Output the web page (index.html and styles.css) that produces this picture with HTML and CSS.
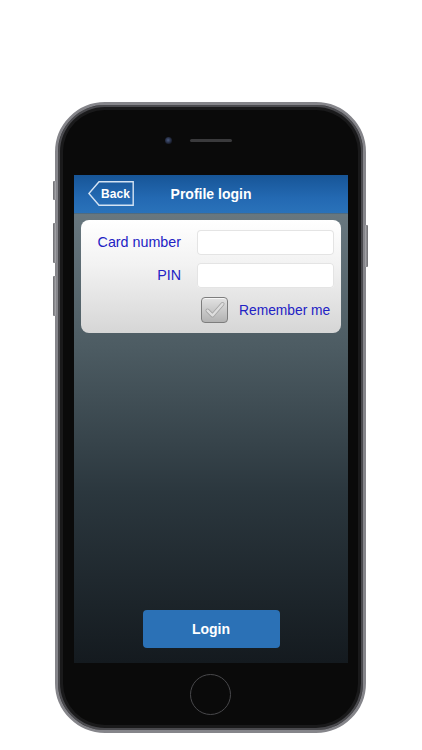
FILE: index.html
```html
<!DOCTYPE html>
<html>
<head>
<meta charset="utf-8">
<link rel="stylesheet" href="styles.css">
</head>
<body>
<div class="phone">
  <span class="side mute"></span>
  <span class="side volup"></span>
  <span class="side voldown"></span>
  <span class="side power"></span>
  <div class="top">
    <span class="camera"></span>
    <span class="speaker"></span>
  </div>
  <div class="screen">
    <div class="nav">
      <div class="nav-left">
        <a class="back">
          <svg class="back-shape" width="46" height="25" viewBox="0 0 46 25"><path d="M11 0.8 H45.2 V24.2 H11 L0.9 12.5 Z" fill="none" stroke="#d4e3f3" stroke-width="1.4"/></svg>
          <span class="back-text">Back</span>
        </a>
      </div>
      <div class="title">Profile login</div>
      <div></div>
    </div>
    <div class="content">
      <div class="card">
        <label class="label">Card number</label>
        <div class="input"></div>
        <label class="label">PIN</label>
        <div class="input"></div>
        <div></div>
        <div class="remember">
          <span class="checkbox">
            <svg width="22" height="20" viewBox="0 0 22 20"><path d="M3.5 10.5 L8.5 15.5 L18.5 4" fill="none" stroke="#a4a4a4" stroke-width="4" stroke-linejoin="round" stroke-linecap="round"/><path d="M3.5 10.5 L8.5 15.5 L18.5 4" fill="none" stroke="#dedede" stroke-width="2.4" stroke-linejoin="round" stroke-linecap="round"/></svg>
          </span>
          <span class="remember-text">Remember me</span>
        </div>
      </div>
      <div class="spacer"></div>
      <button class="login">Login</button>
    </div>
  </div>
  <div class="bottom">
    <span class="home"></span>
  </div>
</div>
</body>
</html>
```
FILE: styles.css
```css
html, body {
  margin: 0;
  padding: 0;
  background: #ffffff;
  font-family: "Liberation Sans", Arial, sans-serif;
}
.phone {
  position: relative;
  box-sizing: border-box;
  margin: 102px 0 0 55px;
  width: 311px;
  height: 631px;
  border-radius: 50px;
  border: 3px solid #85858a;
  background: #0a0a0a;
  box-shadow: inset 0 0 0 2px #4a4a4e, inset 0 0 0 5px #1a1a1b;
  display: flex;
  flex-direction: column;
}
.side {
  position: absolute;
  width: 3px;
  background: linear-gradient(90deg, #6c6c70, #a9a9ad);
  border-radius: 1px;
}
.mute { left: -5px; top: 76px; height: 19px; }
.volup { left: -5px; top: 118px; height: 40px; }
.voldown { left: -5px; top: 171px; height: 40px; }
.power { right: -5px; top: 120px; height: 42px; background: linear-gradient(90deg, #a9a9ad, #6c6c70); }
.top {
  height: 70px;
  display: flex;
  align-items: center;
  justify-content: center;
  gap: 18px;
  padding-right: 24px;
  box-sizing: border-box;
}
.camera {
  width: 7px;
  height: 7px;
  border-radius: 50%;
  background: radial-gradient(circle at 45% 45%, #4a5a80 0, #1d2335 60%, #0d0f15 100%);
}
.speaker {
  width: 42px;
  height: 3px;
  border-radius: 2px;
  background: #3a3a3c;
}
.screen {
  margin-left: 16px;
  width: 274px;
  height: 488px;
  display: flex;
  flex-direction: column;
  background: linear-gradient(180deg, #707f87 0%, #4d5c63 35%, #2b373e 65%, #141a1f 100%);
}
.nav {
  height: 38px;
  flex: none;
  background: linear-gradient(180deg, #175597 0%, #2369b2 60%, #2a72ba 100%);
  display: grid;
  grid-template-columns: 1fr auto 1fr;
  align-items: center;
  box-shadow: 0 1px 0 #4f6b80;
}
.nav-left {
  padding-left: 14px;
  display: flex;
}
.back {
  position: relative;
  width: 46px;
  height: 25px;
  display: flex;
  align-items: center;
  margin-top: -1px;
}
.back-shape {
  position: absolute;
  left: 0;
  top: 0;
}
.back-text {
  position: relative;
  color: #ffffff;
  font-size: 12px;
  font-weight: bold;
  padding-left: 13px;
  letter-spacing: 0.1px;
}
.title {
  color: #ffffff;
  font-weight: bold;
  font-size: 14px;
  margin-top: -1px;
}
.content {
  flex: 1;
  display: flex;
  flex-direction: column;
  align-items: center;
  padding: 7px 7px 15px;
}
.card {
  box-sizing: border-box;
  width: 260px;
  height: 113px;
  border-radius: 8px;
  background: linear-gradient(180deg, #ffffff 0%, #f2f2f2 40%, #d6d6d6 100%);
  display: grid;
  grid-template-columns: 100px 137px;
  grid-template-rows: 25px 25px 26px;
  column-gap: 16px;
  row-gap: 8px;
  padding: 10px 7px 0 0;
  align-items: center;
}
.label {
  text-align: right;
  color: #2222c4;
  font-size: 14.3px;
  margin-top: -1px;
}
.input {
  height: 25px;
  background: #ffffff;
  border-radius: 4px;
  box-shadow: inset 0 0 0 1px #e4e4e4;
}
.remember {
  display: flex;
  align-items: center;
  margin-top: 2px;
  margin-left: 4px;
}
.checkbox {
  box-sizing: border-box;
  width: 27px;
  height: 26px;
  border-radius: 4px;
  border: 1px solid #7d7d7d;
  background: linear-gradient(180deg, #e2e2e2, #b2b2b2);
  box-shadow: inset 0 1px 0 #f6f6f6;
  display: flex;
  align-items: center;
  justify-content: center;
}
.remember-text {
  margin-left: 11px;
  color: #2222c4;
  font-size: 13.8px;
  white-space: nowrap;
}
.spacer {
  flex: 1;
}
.login {
  width: 137px;
  height: 38px;
  border: none;
  border-radius: 4px;
  background: #2b71b6;
  color: #ffffff;
  font-family: "Liberation Sans", Arial, sans-serif;
  font-weight: bold;
  font-size: 14px;
  padding: 0;
}
.bottom {
  flex: 1;
  display: flex;
  align-items: center;
  justify-content: center;
  padding-bottom: 4px;
}
.home {
  box-sizing: border-box;
  width: 41px;
  height: 41px;
  border-radius: 50%;
  border: 1.5px solid #48484b;
  margin-left: -1px;
}
```
